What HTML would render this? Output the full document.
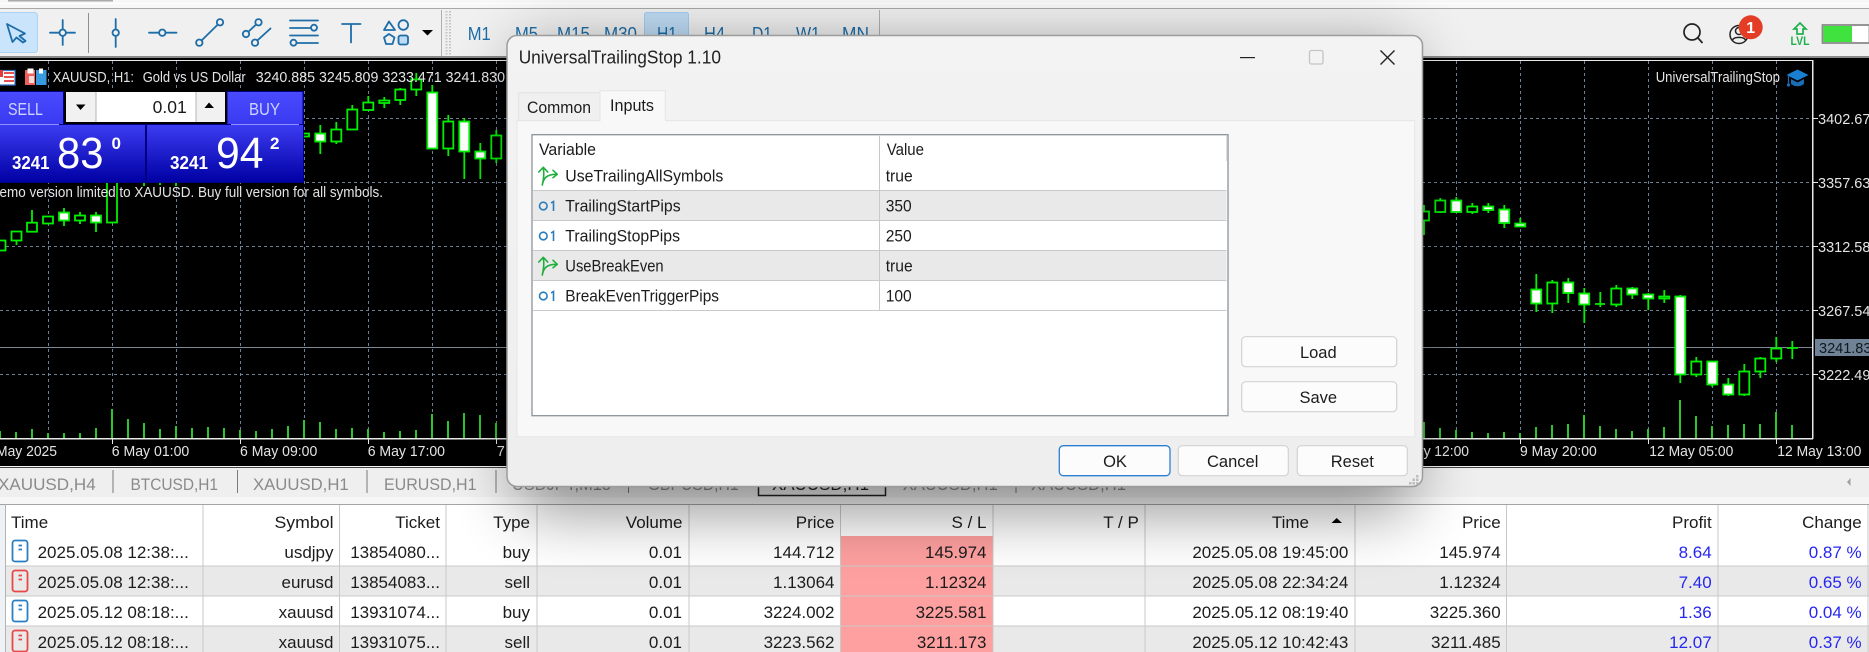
<!DOCTYPE html>
<html><head><meta charset="utf-8"><title>UniversalTrailingStop</title>
<style>
html,body{margin:0;padding:0;background:#f0f0f0;width:1869px;height:652px;overflow:hidden}
svg{display:block;font-family:"Liberation Sans",sans-serif}
.c{fill:#e4e4e4;font-size:14.5px}
.t{fill:#1c1c1c;font-size:17px}
.e{text-anchor:end}
.b{fill:#2626f0}
.d{fill:#1c1c1c;font-size:16.5px}
.tf{fill:#1d6ea8;font-size:18.5px}
.tab{fill:#8a8a8a;font-size:17px}
.btn{fill:#1c1c1c;font-size:16.5px;text-anchor:middle}
</style></head><body>
<svg xmlns="http://www.w3.org/2000/svg" width="1869" height="652" viewBox="0 0 1869 652">
<defs>
<linearGradient id="bt" x1="0" y1="0" x2="0" y2="1"><stop offset="0" stop-color="#3c3cf2"/><stop offset="1" stop-color="#0000a4"/></linearGradient>
<linearGradient id="bh" x1="0" y1="0" x2="0" y2="1"><stop offset="0" stop-color="#4a4aff"/><stop offset="1" stop-color="#3a3af0"/></linearGradient>
<linearGradient id="dg" x1="0" y1="0" x2="0" y2="1"><stop offset="0" stop-color="#f3f3f3"/><stop offset="1" stop-color="#eeeeee"/></linearGradient>
<filter id="sh" filterUnits="userSpaceOnUse" x="200" y="-200" width="1500" height="1000"><feGaussianBlur stdDeviation="33"/></filter>
</defs>
<!-- top strip -->
<rect width="1869" height="652" fill="#f0f0f0"/>
<rect width="1869" height="8" fill="#f7f7f7"/>
<rect x="8" y="0" width="105" height="1.5" fill="#a9a9a9"/>
<rect y="3" width="1869" height="1" fill="#ffffff"/>
<rect y="8" width="1869" height="1" fill="#a8a8a8"/>
<rect y="9" width="1869" height="47" fill="#f0f0f0"/>
<rect y="56" width="1869" height="2" fill="#8a8a8a"/>
<!-- toolbar left icons -->
<rect x="-3" y="12.5" width="40.5" height="40" rx="3" fill="#c9e4fb" stroke="#a9d2f3"/>
<g fill="none" stroke="#1d6ea8" stroke-width="1.8" stroke-linejoin="round" stroke-linecap="round">
<path d="M7 24L25 33.5L19.5 36L25.5 41L23 42.5L16.5 37.5L12.5 42Z"/>
<path d="M50 32.7H59.5M66 32.7H75M62.7 20V29.5M62.7 36V45"/><circle cx="62.7" cy="32.7" r="3.2"/>
<path d="M115.7 19V29.5M115.7 36V47"/><circle cx="115.7" cy="32.7" r="3.2"/>
<path d="M149 32.7H159M165.5 32.7H176.5"/><circle cx="162.3" cy="32.7" r="3.2"/>
<circle cx="199.3" cy="42.7" r="3.2"/><circle cx="220" cy="22.3" r="3.2"/><path d="M201.7 40.4L217.7 24.6"/>
<circle cx="246" cy="34" r="3.2"/><circle cx="258.5" cy="22.3" r="3.2"/><circle cx="255" cy="42.7" r="3.2"/><path d="M248.5 31.6L256 24.6M257.5 40.3L270.5 28.5"/>
<path d="M290 20.5H318M290 28H310M290 35.5H318M297 43H318"/><circle cx="314" cy="27.7" r="3"/><circle cx="293.5" cy="42.7" r="3"/>
<path d="M342 24H360.5M351 24V42.5"/>
<path d="M384 30L389 21.5L395 30Z"/><circle cx="403.3" cy="25" r="4.8"/><path d="M384 37.5L389 34L394.500 37.5L392.500 44H386Z"/>
<rect x="398.5" y="35.5" width="9.5" height="9" rx="2" fill="#bcdcf5"/>
</g>
<rect x="88" y="13" width="1" height="40" fill="#8f8f8f"/>
<path d="M422 30H433L427.500 35.500Z" fill="#000"/>
<rect x="441" y="10" width="1" height="46" fill="#b0b0b0"/>
<path d="M446.500 11V55M450 11V55" stroke="#c4c4c4" stroke-width="2" stroke-dasharray="1.500 1.500"/>
<!-- timeframes -->
<rect x="644.500" y="12.500" width="44" height="30" rx="2" fill="#bfdcf5" stroke="#a3cdf0"/>
<rect x="879" y="10" width="1" height="46" fill="#b0b0b0"/>
<text class="tf" x="467.700" y="40" textLength="23" lengthAdjust="spacingAndGlyphs">M1</text>
<text class="tf" x="515" y="40" textLength="23" lengthAdjust="spacingAndGlyphs">M5</text>
<text class="tf" x="557" y="40" textLength="33" lengthAdjust="spacingAndGlyphs">M15</text>
<text class="tf" x="604" y="40" textLength="33" lengthAdjust="spacingAndGlyphs">M30</text>
<text class="tf" x="657" y="40" textLength="20" lengthAdjust="spacingAndGlyphs">H1</text>
<text class="tf" x="704" y="40" textLength="21" lengthAdjust="spacingAndGlyphs">H4</text>
<text class="tf" x="752" y="40" textLength="20" lengthAdjust="spacingAndGlyphs">D1</text>
<text class="tf" x="796" y="40" textLength="24" lengthAdjust="spacingAndGlyphs">W1</text>
<text class="tf" x="842" y="40" textLength="27" lengthAdjust="spacingAndGlyphs">MN</text>
<!-- right toolbar -->
<g fill="none" stroke="#222" stroke-width="1.700"><circle cx="1692" cy="32" r="8"/><path d="M1698 38L1702.500 43"/>
<circle cx="1739" cy="34.500" r="9" stroke-width="1.500"/><circle cx="1739" cy="31" r="3.500" stroke-width="1.500"/><path d="M1732.500 40C1734 36.500 1744 36.500 1745.500 40" stroke-width="1.500"/></g>
<circle cx="1750.700" cy="27.300" r="12" fill="#e43d25"/><text x="1750.700" y="33" fill="#fff" font-size="16" font-weight="bold" text-anchor="middle">1</text>
<path d="M1800 23L1806 29H1803V34H1797V29H1794Z" fill="none" stroke="#1fb14e" stroke-width="1.700"/>
<text x="1790.500" y="45" fill="#1fb14e" font-size="12" font-weight="bold" textLength="19" lengthAdjust="spacingAndGlyphs">LVL</text>
<rect x="1822.500" y="25" width="47" height="18" fill="#fff" stroke="#8b8b8b" stroke-width="1.800"/>
<rect x="1823.500" y="26" width="28.500" height="16" fill="#3fe23f"/>
<!-- chart -->
<rect y="58" width="1869" height="408" fill="#000"/>
<rect y="60" width="1813" height="1" fill="#e8e8e8"/>
<g stroke="#6d8096" stroke-width="1" stroke-dasharray="3 3" fill="none">
<path d="M48.500 61V438M112.500 61V438M176.500 61V438M240.500 61V438M304.500 61V438M368.500 61V438M432.500 61V438M496.500 61V438M1456.500 61V438M1520.500 61V438M1584.500 61V438M1648.500 61V438M1712.500 61V438M1776.500 61V438"/>
<path d="M0 118.500H1812M0 182.500H1812M0 246.500H1812M0 310.500H1812M0 374.500H1812"/>
</g>
<rect y="347" width="1813" height="1" fill="#7c8792"/>
<!-- volumes -->
<path stroke="#2dc42d" stroke-width="2" fill="none" d="M0 438V431M16 438V432M32 438V429M48 438V433M64 438V433M80 438V433M96 438V428M112 438V409M128 438V419M144 438V423M160 438V429M176 438V426M192 438V428M208 438V427M224 438V428M240 438V430M256 438V431M272 438V429M288 438V426M304 438V420M320 438V422M336 438V429M352 438V428M368 438V429M384 438V432M400 438V431M416 438V430M432 438V414M448 438V421M464 438V413M480 438V415M496 438V423M1424 438V422M1440 438V428M1456 438V430M1472 438V432M1488 438V433M1504 438V432M1520 438V433M1536 438V427M1552 438V425M1568 438V424M1584 438V415M1600 438V426M1616 438V429M1632 438V431M1648 438V429M1664 438V427M1680 438V400M1696 438V416M1712 438V426M1728 438V425M1744 438V424M1760 438V424M1776 438V412M1792 438V425"/>
<!-- wicks -->
<path stroke="#00f000" stroke-width="1.800" fill="none" d="M320.300 125V154M336.300 122V144M352.300 105V129M368.300 96V110M384.300 97V108M400.300 88V105M416.300 73V96M432.300 85V148M448.300 115V156M464.300 118V179M480.300 143V179M496.300 130V163M32 210V232M16.500 231V245M64 208V226M80 212V224M96 212V232M144 183V186M160 183V185M176 183V186M1424 205V235M1440.300 198V213M1456.300 197V213M1472.300 203V214M1488.300 203V213M1504.300 205V228M1520.300 218V227M1536.300 274V312M1552.300 280V313M1568.300 278V303M1584.300 288V323M1600.300 292V307M1616.300 285V307M1632.300 287V299M1648.300 293V310M1664.300 290V303M1680.300 295V383M1696.300 357V377M1712.300 361V387M1728.300 378V396M1744.300 364V396M1760.300 357V378M1776.300 337V362M1792.300 341V359M1787 348H1798M1595 304H1605"/>
<!-- hollow bodies -->
<g fill="#000" stroke="#00f000" stroke-width="1.800">
<rect x="299" y="133.500" width="10" height="3"/>
<rect x="331.300" y="129.500" width="10" height="12"/><rect x="347.300" y="109.500" width="10" height="20"/><rect x="363.300" y="102.500" width="10" height="7.500"/><rect x="379.300" y="100.500" width="10" height="2.500"/><rect x="395.300" y="89.500" width="10" height="10.500"/><rect x="411.300" y="79.500" width="10" height="10"/><rect x="443.300" y="121.500" width="10" height="27"/><rect x="491.300" y="135.500" width="10" height="23"/>
<rect x="-4" y="240.500" width="9.500" height="10"/><rect x="11.500" y="231.500" width="10" height="9"/><rect x="27" y="222.700" width="10" height="9"/><rect x="43" y="216.500" width="10" height="7"/><rect x="75" y="215.500" width="10" height="5"/><rect x="107" y="179" width="10" height="43.500"/>
<rect x="1419" y="211.500" width="10" height="9"/><rect x="1435.300" y="200.500" width="10" height="11.500"/><rect x="1467.300" y="206.500" width="10" height="5.500"/><rect x="1547.300" y="282.500" width="10" height="21"/><rect x="1611.300" y="288.500" width="10" height="16"/><rect x="1659.300" y="296.500" width="10" height="2"/><rect x="1691.300" y="361.500" width="10" height="13"/><rect x="1739.300" y="371.500" width="10" height="23"/><rect x="1755.300" y="358.500" width="10" height="13"/><rect x="1771.300" y="348.500" width="10" height="10"/>
</g>
<g fill="#fff" stroke="#00f000" stroke-width="1.800">
<rect x="315.300" y="133.500" width="10" height="8"/><rect x="427.300" y="92.500" width="10" height="56"/><rect x="459.300" y="121.500" width="10" height="30"/><rect x="475.300" y="151.500" width="10" height="7"/>
<rect x="59" y="212.500" width="10" height="8"/><rect x="91" y="215.500" width="10" height="7"/>
<rect x="1451.300" y="200.500" width="10" height="11.500"/><rect x="1483.300" y="206.500" width="10" height="3.500"/><rect x="1499.300" y="209.500" width="10" height="13.500"/><rect x="1515.300" y="223.500" width="10" height="3"/><rect x="1531.300" y="289.500" width="10" height="14"/><rect x="1563.300" y="282.500" width="10" height="10.500"/><rect x="1579.300" y="293.500" width="10" height="11"/><rect x="1627.300" y="288.500" width="10" height="6"/><rect x="1643.300" y="294.500" width="10" height="4"/><rect x="1675.300" y="296.500" width="10" height="78"/><rect x="1707.300" y="361.500" width="10" height="23"/><rect x="1723.300" y="384.500" width="10" height="10"/>
</g>
<!-- axes -->
<rect x="1812" y="60" width="1.500" height="379" fill="#e8e8e8"/>
<rect y="438" width="1813" height="1.500" fill="#e8e8e8"/>
<path d="M1813 118.500H1818M1813 182.500H1818M1813 246.500H1818M1813 310.500H1818M1813 374.500H1818M112.500 439V444M240.500 439V444M368.500 439V444M496.500 439V444M1520.500 439V444M1648.500 439V444M1776.500 439V444" stroke="#e8e8e8" fill="none"/>
<rect x="1815" y="339" width="54" height="17" fill="#6f8296"/>
<g class="c">
<text x="1818" y="124">3402.670</text><text x="1818" y="188">3357.630</text><text x="1818" y="252">3312.580</text><text x="1818" y="316">3267.540</text><text x="1818" y="380">3222.490</text>
<text x="1819" y="353" style="fill:#101820">3241.830</text>
<text x="-4" y="456" textLength="61" lengthAdjust="spacingAndGlyphs">May 2025</text>
<text x="111.700" y="456" textLength="77.600" lengthAdjust="spacingAndGlyphs">6 May 01:00</text>
<text x="240" y="456" textLength="77.300" lengthAdjust="spacingAndGlyphs">6 May 09:00</text>
<text x="367.700" y="456" textLength="77.300" lengthAdjust="spacingAndGlyphs">6 May 17:00</text>
<text x="496.700" y="456">7</text>
<text x="1423.500" y="456">y</text>
<text x="1434.300" y="456" textLength="34.700" lengthAdjust="spacingAndGlyphs">12:00</text>
<text x="1520" y="456" textLength="76.700" lengthAdjust="spacingAndGlyphs">9 May 20:00</text>
<text x="1649.300" y="456" textLength="84" lengthAdjust="spacingAndGlyphs">12 May 05:00</text>
<text x="1777.300" y="456" textLength="84" lengthAdjust="spacingAndGlyphs">12 May 13:00</text>
<text x="52.700" y="82" textLength="81.300" lengthAdjust="spacingAndGlyphs">XAUUSD, H1:</text>
<text x="142.700" y="82" textLength="103" lengthAdjust="spacingAndGlyphs">Gold vs US Dollar</text>
<text x="255.700" y="82" textLength="249.300" lengthAdjust="spacingAndGlyphs">3240.885 3245.809 3233.471 3241.830</text>
<text x="1655.700" y="82" textLength="124.300" lengthAdjust="spacingAndGlyphs">UniversalTrailingStop</text>
<text x="-0.500" y="197" textLength="383.500" lengthAdjust="spacingAndGlyphs">emo version limited to XAUUSD. Buy full version for all symbols.</text>
</g>
<!-- chart header icons -->
<rect x="-2" y="70" width="17" height="15" fill="#fff"/><path d="M-2 70.500H15V85H-2Z" fill="none" stroke="#3676c4" stroke-width="1.200"/><path d="M4 73H14M4 77H14M4 81H14" stroke="#e23b3b" stroke-width="1.800"/><rect x="-2" y="70" width="5" height="7" fill="#e23b3b"/>
<rect x="25" y="70" width="10" height="15" fill="#f0605a"/><rect x="36" y="70" width="10.500" height="15" fill="#3a9ae0"/><rect x="27.500" y="68.500" width="6" height="5" fill="#fff"/><rect x="39" y="68.500" width="4" height="5" fill="#fff"/><rect x="29" y="76" width="5" height="7" fill="#f9d8d5"/>
<!-- hat -->
<path d="M1797.500 69.500L1808.500 75L1797.500 80.500L1786.500 75Z" fill="#1a7fd0"/><path d="M1791 79V84C1795 87 1800 87 1804 84V79L1797.500 82.500Z" fill="#1a6cb5"/><path d="M1788.500 76V84" stroke="#1a6cb5" stroke-width="1.200"/><circle cx="1788.500" cy="85" r="1.600" fill="#1a6cb5"/>
<!-- trade panel -->
<rect x="0" y="91" width="304" height="92" fill="#000080"/>
<rect x="0" y="92" width="63" height="32" fill="url(#bh)"/>
<rect x="227.500" y="92" width="75" height="32" fill="url(#bh)"/>
<rect x="0" y="124" width="59" height="1" fill="#8e8eff"/><rect x="231" y="124" width="68" height="1" fill="#8e8eff"/>
<rect x="0" y="125" width="145" height="57" fill="url(#bt)"/>
<rect x="147" y="125" width="156" height="57" fill="url(#bt)"/>
<rect x="64" y="90.500" width="163" height="33.500" fill="#000"/>
<rect x="66" y="92" width="159" height="30" fill="#fff"/>
<rect x="66" y="92" width="29.500" height="30" fill="#f1f1f1"/><rect x="196" y="92" width="29" height="30" fill="#f1f1f1"/>
<rect x="95.500" y="92" width="1" height="30" fill="#b5b5b5"/><rect x="195.500" y="92" width="1" height="30" fill="#b5b5b5"/>
<path d="M76 104.500H85.500L80.500 110Z" fill="#000"/><path d="M204.500 108H214L209 102.500Z" fill="#000"/>
<text x="186.700" y="113" text-anchor="end" font-size="17.500" fill="#1a1a1a">0.01</text>
<text x="8" y="115" fill="#cdd4ff" font-size="17.500" textLength="35" lengthAdjust="spacingAndGlyphs">SELL</text>
<text x="249" y="115" fill="#cdd4ff" font-size="17.500" textLength="31" lengthAdjust="spacingAndGlyphs">BUY</text>
<g fill="#fff">
<text x="12" y="169" font-size="18" font-weight="bold" textLength="37.500" lengthAdjust="spacingAndGlyphs">3241</text>
<text x="57" y="168" font-size="44" textLength="46.500" lengthAdjust="spacingAndGlyphs">83</text>
<text x="111.500" y="149" font-size="17" font-weight="bold">0</text>
<text x="170" y="169" font-size="18" font-weight="bold" textLength="38" lengthAdjust="spacingAndGlyphs">3241</text>
<text x="216" y="168" font-size="44" textLength="47.500" lengthAdjust="spacingAndGlyphs">94</text>
<text x="270" y="149" font-size="17" font-weight="bold">2</text>
</g>
<!-- chart bottom -->
<rect y="466" width="1869" height="1" fill="#f5f5f5"/><rect y="467" width="1869" height="1" fill="#444"/>
<!-- tab bar -->
<rect y="468" width="1869" height="29" fill="#efefef"/>
<rect y="497" width="1869" height="7" fill="#f7f7f7"/>
<g fill="#7a7a7a"><rect x="112.500" y="470" width="1" height="23"/><rect x="237" y="470" width="1" height="23"/><rect x="366.500" y="470" width="1" height="23"/><rect x="495.500" y="470" width="1" height="23"/><rect x="628" y="470" width="1" height="23"/><rect x="1015.500" y="470" width="1" height="23"/></g>
<g class="tab">
<text x="-2" y="490" textLength="97.700" lengthAdjust="spacingAndGlyphs">XAUUSD,H4</text>
<text x="130.500" y="490" textLength="87.500" lengthAdjust="spacingAndGlyphs">BTCUSD,H1</text>
<text x="253" y="490" textLength="95.700" lengthAdjust="spacingAndGlyphs">XAUUSD,H1</text>
<text x="384" y="490" textLength="92.500" lengthAdjust="spacingAndGlyphs">EURUSD,H1</text>
<text x="512" y="490" textLength="99" lengthAdjust="spacingAndGlyphs">USDJPY,M15</text>
<text x="647.700" y="490" textLength="91" lengthAdjust="spacingAndGlyphs">GBPUSD,H1</text>
<text x="772" y="490" textLength="97" lengthAdjust="spacingAndGlyphs" style="fill:#222">XAUUSD,H1</text>
<text x="902.700" y="490" textLength="95" lengthAdjust="spacingAndGlyphs">XAUUSD,H1</text>
<text x="1031" y="490" textLength="95" lengthAdjust="spacingAndGlyphs">XAUUSD,H1</text>
</g>
<path d="M758.500 470V495.500H885.500V470" fill="none" stroke="#222" stroke-width="1.500"/>
<path d="M1850.500 478V486L1847 482Z" fill="#a0a0a0"/>
<!-- table -->
<rect x="0" y="504" width="5" height="148" fill="#eef2f6"/>
<rect x="5" y="504" width="1864" height="148" fill="#fff"/>
<rect x="0" y="504" width="1869" height="1" fill="#a4a4a4"/>
<rect x="5" y="504" width="1" height="148" fill="#b4b4b4"/>
<rect x="6" y="566" width="1863" height="30" fill="#e9e9e9"/>
<rect x="6" y="626" width="1863" height="26" fill="#e9e9e9"/>
<rect x="840.500" y="536" width="152" height="116" fill="#ffa0a0"/>
<g fill="#c9c9c9">
<rect x="6" y="565.500" width="1863" height="1"/><rect x="6" y="595.500" width="1863" height="1"/><rect x="6" y="625.500" width="1863" height="1"/>
<rect x="202.500" y="505" width="1" height="147"/><rect x="339" y="505" width="1" height="147"/><rect x="445.500" y="505" width="1" height="147"/><rect x="536.500" y="505" width="1" height="147"/><rect x="688.500" y="505" width="1" height="147"/><rect x="840" y="505" width="1" height="147"/><rect x="992.500" y="505" width="1" height="147"/><rect x="1144.500" y="505" width="1" height="147"/><rect x="1354.500" y="505" width="1" height="147"/><rect x="1506" y="505" width="1" height="147"/><rect x="1717.500" y="505" width="1" height="147"/><rect x="1867.500" y="505" width="1" height="147"/>
</g>
<!-- doc icons -->
<g fill="none" stroke-width="1.800">
<rect x="12.500" y="540.500" width="15" height="21" rx="2.500" stroke="#2b7fc0"/><path d="M18.500 545.500H22M18.500 549.500H22" stroke="#2b7fc0"/>
<rect x="12.500" y="570.500" width="15" height="21" rx="2.500" stroke="#e84848"/><path d="M18.500 575.500H22M18.500 579.500H22" stroke="#e84848"/>
<rect x="12.500" y="600.500" width="15" height="21" rx="2.500" stroke="#2b7fc0"/><path d="M18.500 605.500H22M18.500 609.500H22" stroke="#2b7fc0"/>
<rect x="12.500" y="630.500" width="15" height="21" rx="2.500" stroke="#e84848"/><path d="M18.500 635.500H22M18.500 639.500H22" stroke="#e84848"/>
</g>
<g class="t">
<text x="11" y="528">Time</text>
<text class="e" x="333.500" y="528" textLength="59" lengthAdjust="spacingAndGlyphs">Symbol</text>
<text class="e" x="440" y="528">Ticket</text>
<text class="e" x="530" y="528">Type</text>
<text class="e" x="682.500" y="528">Volume</text>
<text class="e" x="834.500" y="528">Price</text>
<text class="e" x="986.500" y="528">S / L</text>
<text class="e" x="1138.800" y="528">T / P</text>
<text class="e" x="1309" y="528">Time</text>
<text class="e" x="1500.700" y="528">Price</text>
<text class="e" x="1711.700" y="528">Profit</text>
<text class="e" x="1861.700" y="528">Change</text>

<text x="37.600" y="558">2025.05.08 12:38:...</text>
<text class="e" x="333.500" y="558">usdjpy</text>
<text class="e" x="440" y="558">13854080...</text>
<text class="e" x="530" y="558">buy</text>
<text class="e" x="682" y="558">0.01</text>
<text class="e" x="834.500" y="558">144.712</text>
<text class="e" x="986.500" y="558">145.974</text>
<text class="e" x="1348.300" y="558">2025.05.08 19:45:00</text>
<text class="e" x="1500.700" y="558">145.974</text>
<text class="e b" x="1711.700" y="558">8.64</text>
<text class="e b" x="1861.700" y="558">0.87 %</text>

<text x="37.600" y="588">2025.05.08 12:38:...</text>
<text class="e" x="333.500" y="588">eurusd</text>
<text class="e" x="440" y="588">13854083...</text>
<text class="e" x="530" y="588">sell</text>
<text class="e" x="682" y="588">0.01</text>
<text class="e" x="834.500" y="588">1.13064</text>
<text class="e" x="986.500" y="588">1.12324</text>
<text class="e" x="1348.300" y="588">2025.05.08 22:34:24</text>
<text class="e" x="1500.700" y="588">1.12324</text>
<text class="e b" x="1711.700" y="588">7.40</text>
<text class="e b" x="1861.700" y="588">0.65 %</text>

<text x="37.600" y="618">2025.05.12 08:18:...</text>
<text class="e" x="333.500" y="618">xauusd</text>
<text class="e" x="440" y="618">13931074...</text>
<text class="e" x="530" y="618">buy</text>
<text class="e" x="682" y="618">0.01</text>
<text class="e" x="834.500" y="618">3224.002</text>
<text class="e" x="986.500" y="618">3225.581</text>
<text class="e" x="1348.300" y="618">2025.05.12 08:19:40</text>
<text class="e" x="1500.700" y="618">3225.360</text>
<text class="e b" x="1711.700" y="618">1.36</text>
<text class="e b" x="1861.700" y="618">0.04 %</text>

<text x="37.600" y="648">2025.05.12 08:18:...</text>
<text class="e" x="333.500" y="648">xauusd</text>
<text class="e" x="440" y="648">13931075...</text>
<text class="e" x="530" y="648">sell</text>
<text class="e" x="682" y="648">0.01</text>
<text class="e" x="834.500" y="648">3223.562</text>
<text class="e" x="986.500" y="648">3211.173</text>
<text class="e" x="1348.300" y="648">2025.05.12 10:42:43</text>
<text class="e" x="1500.700" y="648">3211.485</text>
<text class="e b" x="1711.700" y="648">12.07</text>
<text class="e b" x="1861.700" y="648">0.37 %</text>
</g>
<path d="M1331.500 523H1342L1336.700 518Z" fill="#000"/>
<!-- dialog shadow -->
<rect x="520" y="50" width="890" height="460" rx="10" fill="#000" opacity=".44" filter="url(#sh)"/>
<!-- dialog -->
<rect x="507" y="35.500" width="915.500" height="451" rx="10" fill="url(#dg)" stroke="#9c9c9c" stroke-width="1.500"/>
<text x="518.700" y="63.500" fill="#222" font-size="18" textLength="202.300" lengthAdjust="spacingAndGlyphs">UniversalTrailingStop 1.10</text>
<rect x="1240" y="57" width="15" height="1.200" fill="#222"/>
<rect x="1309.500" y="50.500" width="13.500" height="13.500" rx="2" fill="none" stroke="#c4c4c4" stroke-width="1.300"/>
<path d="M1380.500 50.500L1394.500 64.500M1394.500 50.500L1380.500 64.500" stroke="#222" stroke-width="1.400" fill="none"/>
<!-- tabs -->
<rect x="518.700" y="92.700" width="81.300" height="28" fill="#f0f0f0" stroke="#e2e2e2"/>
<rect x="517" y="120.700" width="897.700" height="316" fill="#f8f8f8" stroke="#e6e6e6"/>
<path d="M600 121V90.700H665.300V121" fill="#f8f8f8" stroke="#e4e4e4"/>
<rect x="600.500" y="119.500" width="64.500" height="2" fill="#f8f8f8"/>
<text class="d" x="527" y="113" textLength="64" lengthAdjust="spacingAndGlyphs">Common</text>
<text class="d" x="610" y="111" textLength="44" lengthAdjust="spacingAndGlyphs">Inputs</text>
<!-- list -->
<rect x="532" y="134.700" width="696" height="281" fill="#fff" stroke="#8b9298" stroke-width="1.300"/>
<rect x="533" y="190.500" width="693.500" height="29.500" fill="#e9e9e9"/>
<rect x="533" y="250.500" width="693.500" height="30" fill="#e9e9e9"/>
<g fill="#c9c9c9"><rect x="533" y="190" width="693.500" height="1"/><rect x="533" y="220" width="693.500" height="1"/><rect x="533" y="250" width="693.500" height="1"/><rect x="533" y="280" width="693.500" height="1"/><rect x="533" y="310" width="693.500" height="1"/><rect x="879" y="136" width="1" height="175"/><rect x="1226" y="136" width="1" height="25" opacity=".6"/></g>
<g class="d">
<text x="539" y="155" textLength="57" lengthAdjust="spacingAndGlyphs">Variable</text>
<text x="886.700" y="155" textLength="37.300" lengthAdjust="spacingAndGlyphs">Value</text>
<text x="565.300" y="181.700" textLength="158" lengthAdjust="spacingAndGlyphs">UseTrailingAllSymbols</text>
<text x="885.700" y="181.700" textLength="27" lengthAdjust="spacingAndGlyphs">true</text>
<text x="565.300" y="211.700" textLength="115.300" lengthAdjust="spacingAndGlyphs">TrailingStartPips</text>
<text x="885.700" y="211.700" textLength="26" lengthAdjust="spacingAndGlyphs">350</text>
<text x="565.300" y="241.700" textLength="114.700" lengthAdjust="spacingAndGlyphs">TrailingStopPips</text>
<text x="885.700" y="241.700" textLength="26" lengthAdjust="spacingAndGlyphs">250</text>
<text x="565.300" y="271.700" textLength="98.300" lengthAdjust="spacingAndGlyphs">UseBreakEven</text>
<text x="885.700" y="271.700" textLength="27" lengthAdjust="spacingAndGlyphs">true</text>
<text x="565.300" y="301.700" textLength="153.700" lengthAdjust="spacingAndGlyphs">BreakEvenTriggerPips</text>
<text x="885.700" y="301.700" textLength="26" lengthAdjust="spacingAndGlyphs">100</text>
</g>
<!-- list icons -->
<g fill="none" stroke="#1fae3e" stroke-width="1.600" stroke-linecap="round" stroke-linejoin="round">
<path d="M542.300 185C544 178 544 172 543.300 168M538.800 172L543.300 167.300L547.700 172M542.800 183C544 177 549 174 557 174.300M553 170.300L557.300 174.300L553 177.700"/>
<path d="M542.300 275C544 268 544 262 543.300 258M538.800 262L543.300 257.300L547.700 262M542.800 273C544 267 549 264 557 264.300M553 260.300L557.300 264.300L553 267.700"/>
</g>
<g fill="none" stroke="#2b7cbc" stroke-width="1.600"><circle cx="543.300" cy="206" r="3.800"/><path d="M551 203L553.500 201.500V211"/><circle cx="543.300" cy="236" r="3.800"/><path d="M551 233L553.500 231.500V241"/><circle cx="543.300" cy="296" r="3.800"/><path d="M551 293L553.500 291.500V301"/></g>
<!-- buttons -->
<g fill="#fcfcfc" stroke="#d2d2d2" stroke-width="1.200">
<rect x="1241.700" y="336.700" width="155" height="30" rx="4"/>
<rect x="1241.700" y="381.700" width="155" height="30" rx="4"/>
<rect x="1178.300" y="445.700" width="110" height="30" rx="4"/>
<rect x="1297.300" y="445.700" width="110" height="30" rx="4"/>
</g>
<rect x="1059.300" y="445.700" width="110.700" height="30" rx="4" fill="#fcfcfc" stroke="#2b7fd0" stroke-width="1.300"/>
<text class="btn" x="1318.300" y="358">Load</text>
<text class="btn" x="1318.300" y="403">Save</text>
<text class="btn" x="1115" y="467">OK</text>
<text class="btn" x="1232.700" y="467">Cancel</text>
<text class="btn" x="1352.300" y="467">Reset</text>
<!-- grip -->
<g fill="#bdbdbd"><rect x="1416" y="475" width="2.500" height="2.500"/><rect x="1412.500" y="478.500" width="2.500" height="2.500"/><rect x="1416" y="478.500" width="2.500" height="2.500"/><rect x="1409" y="482" width="2.500" height="2.500"/><rect x="1412.500" y="482" width="2.500" height="2.500"/><rect x="1416" y="482" width="2.500" height="2.500"/></g>
</svg>
</body></html>
